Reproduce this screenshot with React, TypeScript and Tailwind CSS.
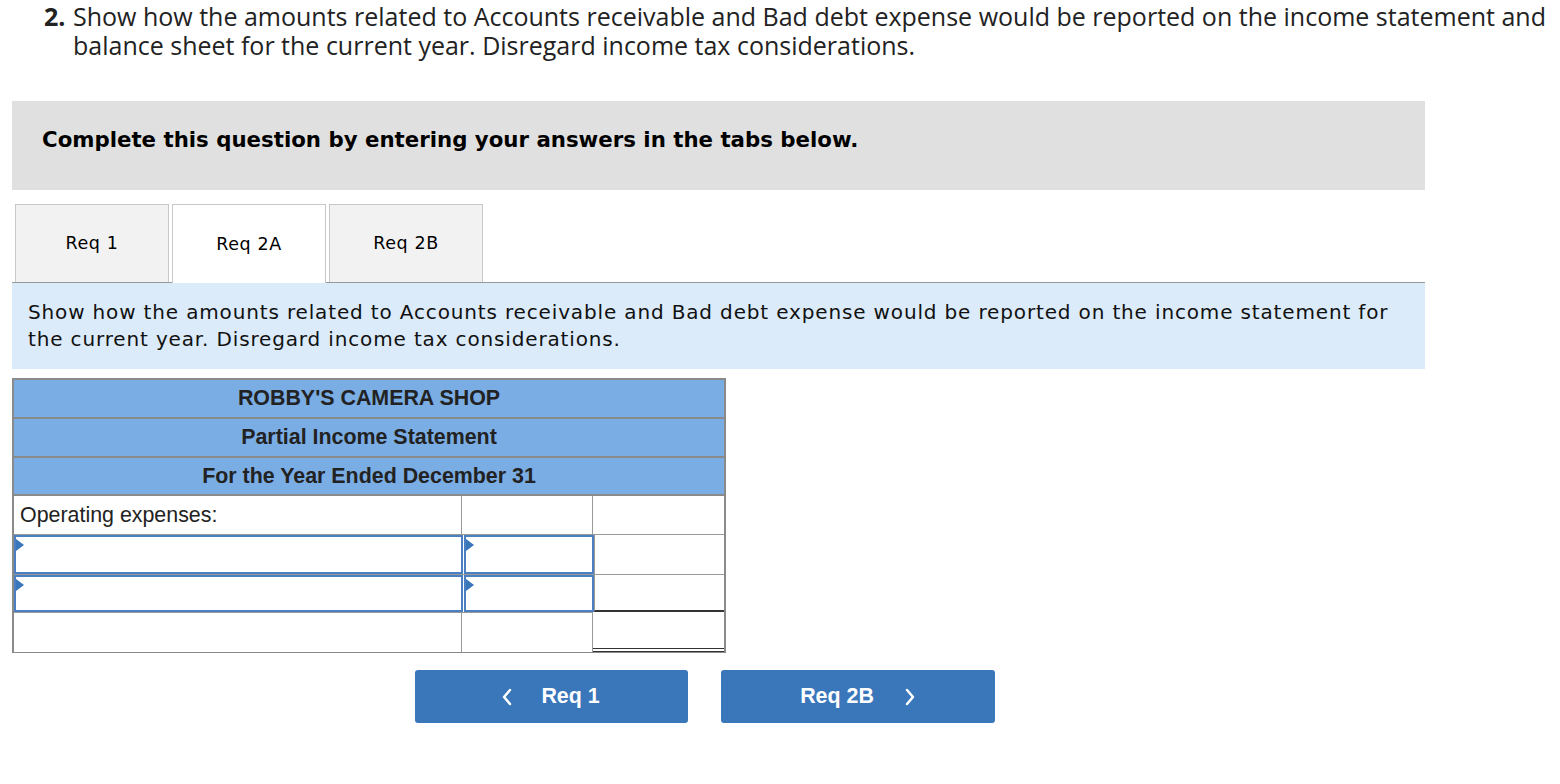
import React from 'react';

const verdana = { fontFamily: '"DejaVu Sans", Verdana, sans-serif' };
const arial = { fontFamily: '"Liberation Sans", Arial, sans-serif' };

function Tab({ label, active }: { label: string; active?: boolean }) {
  return (
    <div
      className={`w-[154px] flex items-center justify-center border border-[#c8c8c8] border-b-0 text-[17.5px] tracking-[0.6px] text-black ${
        active ? 'bg-white relative top-[1px] h-[79px]' : 'bg-[#f2f2f2] h-[78px]'
      }`}
    >
      {label}
    </div>
  );
}

function InputCell({ w }: { w: string }) {
  return (
    <div className={`${w} relative h-full border-2 border-[#4a80c2] bg-white`}>
      <span className="absolute left-0 top-[2px] w-0 h-0 border-t-[6px] border-b-[6px] border-l-[8px] border-t-transparent border-b-transparent border-l-[#3a76ba]" />
    </div>
  );
}

export default function App() {
  return (
    <div className="w-[1560px] h-[784px] bg-white overflow-hidden">
      {/* Question */}
      <div className="pl-[44px] pt-[2px] text-[25px] leading-[29px] text-[#222]" style={{ fontFamily: '"Open Sans", Lato, sans-serif' }}>
        <div className="flex">
          <span className="font-bold w-[29px] shrink-0">2.</span>
          <span>
            Show how the amounts related to Accounts receivable and Bad debt expense would be reported on the income statement and
            <br />
            balance sheet for the current year. Disregard income tax considerations.
          </span>
        </div>
      </div>

      {/* Instruction box */}
      <div className="ml-[12px] mt-[41px] w-[1413px] h-[89px] bg-[#e0e0e0] flex items-center pl-[30px] pb-[12px]">
        <span className="font-bold text-[21.3px] text-black" style={verdana}>
          Complete this question by entering your answers in the tabs below.
        </span>
      </div>

      {/* Tabs */}
      <div className="ml-[15px] mt-[13px] flex gap-[3px] items-end" style={verdana}>
        <Tab label="Req 1" />
        <Tab label="Req 2A" active />
        <Tab label="Req 2B" />
      </div>
      <div className="ml-[12px] w-[1413px] border-t border-[#999]" />

      {/* Info box */}
      <div className="ml-[12px] w-[1413px] h-[86px] bg-[#dbebf9] px-[16px] pt-[16px] text-[20px] tracking-[0.85px] leading-[27px] text-[#111]" style={verdana}>
        Show how the amounts related to Accounts receivable and Bad debt expense would be reported on the income statement for
        <br />
        the current year. Disregard income tax considerations.
      </div>

      {/* Statement table */}
      <div className="ml-[12px] mt-[9px] w-[714px] border-2 border-[#8a8a8a] border-b-[1px]" style={arial}>
        {["ROBBY'S CAMERA SHOP", 'Partial Income Statement', 'For the Year Ended December 31'].map((t, i) => (
          <div
            key={t}
            className={`${i === 2 ? 'h-[36px]' : 'h-[37px]'} bg-[#7aade4] flex items-center justify-center font-bold text-[21.4px] text-[#222] ${
              i > 0 ? 'border-t-2 border-[#8a8a8a] box-content' : ''
            }`}
          >
            {t}
          </div>
        ))}
        <div className="flex h-[40px] border-t-2 border-[#8a8a8a]">
          <div className="w-[448px] border-r border-[#999] flex items-center pl-[6px] text-[21.4px] text-[#222]">
            Operating expenses:
          </div>
          <div className="w-[131px] border-r border-[#999]" />
          <div className="flex-1" />
        </div>
        <div className="flex h-[40px] border-t border-[#999]">
          <InputCell w="w-[449px]" />
          <div className="w-[1px]" />
          <InputCell w="w-[130px]" />
          <div className="flex-1 border-l border-[#999]" />
        </div>
        <div className="flex h-[38px] border-t border-[#999]">
          <InputCell w="w-[449px]" />
          <div className="w-[1px]" />
          <InputCell w="w-[130px]" />
          <div className="flex-1 border-l border-[#999] border-b-2 border-b-[#333]" />
        </div>
        <div className="flex h-[40px]">
          <div className="w-[448px] border-r border-[#999] border-t border-t-[#999]" />
          <div className="w-[131px] border-r border-[#999] border-t border-t-[#999]" />
          <div className="flex-1 border-b-[4px] border-double border-b-[#333]" />
        </div>
      </div>

      {/* Navigation */}
      <div className="flex gap-[33px] ml-[415px] mt-[17px]" style={arial}>
        <button className="w-[273px] h-[53px] rounded-[3px] bg-[#3a76ba] text-white font-bold text-[21.4px] flex items-center justify-center gap-[28px]">
          <svg width="12" height="20" viewBox="0 0 12 20" fill="none" stroke="white" strokeWidth="2.5" strokeLinecap="round" strokeLinejoin="round">
            <path d="M9 3 L3 10 L9 17" />
          </svg>
          <span className="pr-[2px]">Req 1</span>
        </button>
        <button className="w-[274px] h-[53px] rounded-[3px] bg-[#3a76ba] text-white font-bold text-[21.4px] flex items-center justify-center gap-[28px]">
          <span className="pr-[2px]">Req 2B</span>
          <svg width="12" height="20" viewBox="0 0 12 20" fill="none" stroke="white" strokeWidth="2.5" strokeLinecap="round" strokeLinejoin="round">
            <path d="M3 3 L9 10 L3 17" />
          </svg>
        </button>
      </div>
    </div>
  );
}
